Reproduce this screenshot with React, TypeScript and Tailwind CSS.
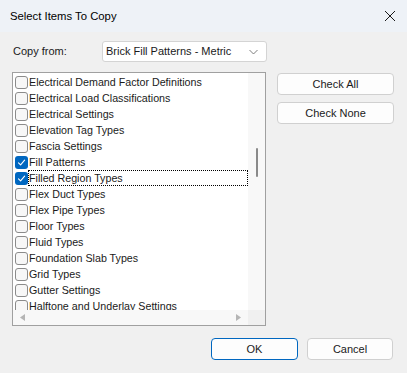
import React, { useState } from 'react';

const items = [
  'Electrical Demand Factor Definitions',
  'Electrical Load Classifications',
  'Electrical Settings',
  'Elevation Tag Types',
  'Fascia Settings',
  'Fill Patterns',
  'Filled Region Types',
  'Flex Duct Types',
  'Flex Pipe Types',
  'Floor Types',
  'Fluid Types',
  'Foundation Slab Types',
  'Grid Types',
  'Gutter Settings',
  'Halftone and Underlay Settings',
];

const Box = ({ checked }: { checked: boolean }) =>
  checked ? (
    <span className="w-[13px] h-[13px] rounded-[3px] bg-[#0067c0] flex items-center justify-center shrink-0">
      <svg width="9" height="9" viewBox="0 0 9 9" fill="none">
        <path d="M1.5 4.8 L3.6 6.8 L7.6 2.2" stroke="white" strokeWidth="1.1" strokeLinecap="round" strokeLinejoin="round" />
      </svg>
    </span>
  ) : (
    <span className="w-[13px] h-[13px] rounded-[3px] border border-[#8b8b8b] bg-[#f7f7f7] shrink-0" />
  );

export default function App() {
  const [checked, setChecked] = useState<string[]>(['Fill Patterns', 'Filled Region Types']);

  const toggle = (name: string) =>
    setChecked(prev => (prev.includes(name) ? prev.filter(n => n !== name) : [...prev, name]));

  return (
    <div
      className="w-[407px] h-[373px] bg-[#f0f0f0] flex flex-col text-[11px] text-[#1a1a1a] overflow-hidden"
      style={{ fontFamily: '"Liberation Sans", Arial, sans-serif' }}
    >
      {/* Title bar */}
      <div className="h-[32px] bg-[#eef2f7] flex items-center justify-between pl-[10px] pr-[11px] shrink-0">
        <span className="text-[11.3px] text-black">Select Items To Copy</span>
        <svg width="12" height="12" viewBox="0 0 12 12" stroke="#1a1a1a" strokeWidth="1">
          <path d="M1 1 L11 11 M11 1 L1 11" />
        </svg>
      </div>

      <div className="flex flex-col pl-[12px] pr-[13px] pt-[9px]">
        {/* Copy from */}
        <div className="flex items-center h-[21px]">
          <span className="w-[90px] pl-[1px]">Copy from:</span>
          <div className="w-[165px] h-[21px] bg-white border border-[#d4d4d4] rounded-[3px] flex items-center justify-between pl-[3px] pr-[8px]">
            <span>Brick Fill Patterns - Metric</span>
            <svg width="9" height="6" viewBox="0 0 9 6" fill="none" stroke="#707070" strokeWidth="0.9">
              <path d="M0.5 1 L4.5 5 L8.5 1" />
            </svg>
          </div>
        </div>

        {/* List + buttons */}
        <div className="flex mt-[10px] gap-[11px]">
          <div className="w-[254px] h-[254px] border border-[#a0a0a0] bg-white flex flex-col">
            <div className="flex flex-1 min-h-0">
              <div className="flex-1 overflow-hidden pt-[1px] text-[10.7px]">
                {items.map(name => (
                  <div
                    key={name}
                    onClick={() => toggle(name)}
                    className="h-[16px] flex items-center pl-[2px] whitespace-nowrap"
                  >
                    <Box checked={checked.includes(name)} />
                    <span
                      className={
                        name === 'Filled Region Types'
                          ? 'flex-1 h-[16px] leading-[14px] border border-dotted border-black'
                          : 'pl-[1px] leading-[16px]'
                      }
                    >
                      {name}
                    </span>
                  </div>
                ))}
              </div>
              <div className="w-[17px] bg-[#f8f8f8] relative shrink-0">
                <div className="absolute left-[8px] top-[75px] w-[2px] h-[29px] rounded-full bg-[#8a8a8a]" />
              </div>
            </div>
            <div className="h-[15px] flex shrink-0">
              <div className="flex-1 bg-[#f8f8f8] flex items-center justify-between px-[7px]">
                <svg width="5" height="7" viewBox="0 0 5 7"><path d="M5 0 L0 3.5 L5 7Z" fill="#b5b5b5" /></svg>
                <svg width="5" height="7" viewBox="0 0 5 7"><path d="M0 0 L5 3.5 L0 7Z" fill="#b5b5b5" /></svg>
              </div>
              <div className="w-[17px] bg-[#f0f0f0]" />
            </div>
          </div>

          <div className="flex flex-col gap-[7px] pt-[1px]">
            <button className="w-[117px] h-[22px] bg-[#fdfdfd] border border-[#d0d0d0] rounded-[4px]">Check All</button>
            <button className="w-[117px] h-[22px] bg-[#fdfdfd] border border-[#d0d0d0] rounded-[4px]">Check None</button>
          </div>
        </div>

        {/* OK / Cancel */}
        <div className="flex justify-end gap-[9px] mt-[12px] pr-[1px]">
          <button className="w-[87px] h-[22px] bg-[#fdfdfd] border border-[#0067c0] rounded-[4px]">OK</button>
          <button className="w-[86px] h-[22px] bg-[#fdfdfd] border border-[#d0d0d0] rounded-[4px]">Cancel</button>
        </div>
      </div>
    </div>
  );
}
